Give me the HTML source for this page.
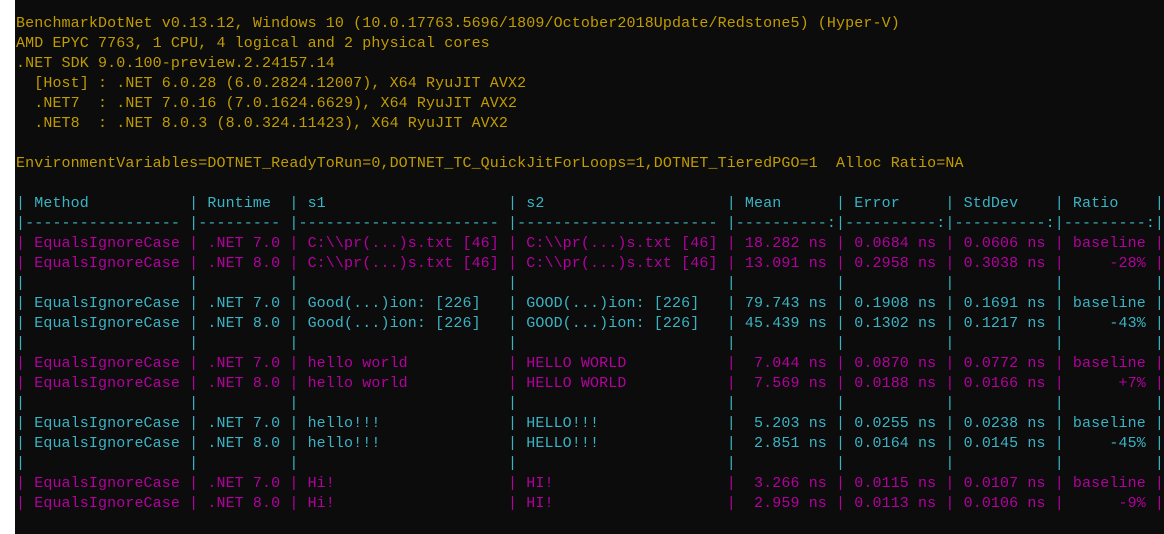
<!DOCTYPE html>
<html><head><meta charset="utf-8"><style>
html,body{margin:0;padding:0;background:#fff;width:1164px;height:534px;overflow:hidden}
#t{position:absolute;left:15px;top:0;width:1149px;height:534px;background:#0c0c0c;overflow:hidden}
pre{margin:0;position:absolute;left:1px;top:14px;font-family:"Liberation Mono",monospace;font-size:15px;letter-spacing:0.11px;line-height:20px;white-space:pre;color:#cccccc}
.y{color:#c19c00}.c{color:#3ab4c4}.m{color:#b4009e}
</style></head><body><div id="t"><pre><span class="y">BenchmarkDotNet v0.13.12, Windows 10 (10.0.17763.5696/1809/October2018Update/Redstone5) (Hyper-V)
AMD EPYC 7763, 1 CPU, 4 logical and 2 physical cores
.NET SDK 9.0.100-preview.2.24157.14
  [Host] : .NET 6.0.28 (6.0.2824.12007), X64 RyuJIT AVX2
  .NET7  : .NET 7.0.16 (7.0.1624.6629), X64 RyuJIT AVX2
  .NET8  : .NET 8.0.3 (8.0.324.11423), X64 RyuJIT AVX2

EnvironmentVariables=DOTNET_ReadyToRun=0,DOTNET_TC_QuickJitForLoops=1,DOTNET_TieredPGO=1  Alloc Ratio=NA
</span>
<span class="c">| Method           | Runtime  | s1                    | s2                    | Mean      | Error     | StdDev    | Ratio    | A
|----------------- |--------- |---------------------- |---------------------- |----------:|----------:|----------:|---------:|-</span>
<span class="m">| EqualsIgnoreCase | .NET 7.0 | C:\\pr(...)s.txt [46] | C:\\pr(...)s.txt [46] | 18.282 ns | 0.0684 ns | 0.0606 ns | baseline |
| EqualsIgnoreCase | .NET 8.0 | C:\\pr(...)s.txt [46] | C:\\pr(...)s.txt [46] | 13.091 ns | 0.2958 ns | 0.3038 ns |     -28% |</span>
<span class="c">|                  |          |                       |                       |           |           |           |          |
| EqualsIgnoreCase | .NET 7.0 | Good(...)ion: [226]   | GOOD(...)ion: [226]   | 79.743 ns | 0.1908 ns | 0.1691 ns | baseline |
| EqualsIgnoreCase | .NET 8.0 | Good(...)ion: [226]   | GOOD(...)ion: [226]   | 45.439 ns | 0.1302 ns | 0.1217 ns |     -43% |
|                  |          |                       |                       |           |           |           |          |</span>
<span class="m">| EqualsIgnoreCase | .NET 7.0 | hello world           | HELLO WORLD           |  7.044 ns | 0.0870 ns | 0.0772 ns | baseline |
| EqualsIgnoreCase | .NET 8.0 | hello world           | HELLO WORLD           |  7.569 ns | 0.0188 ns | 0.0166 ns |      +7% |</span>
<span class="c">|                  |          |                       |                       |           |           |           |          |
| EqualsIgnoreCase | .NET 7.0 | hello!!!              | HELLO!!!              |  5.203 ns | 0.0255 ns | 0.0238 ns | baseline |
| EqualsIgnoreCase | .NET 8.0 | hello!!!              | HELLO!!!              |  2.851 ns | 0.0164 ns | 0.0145 ns |     -45% |
|                  |          |                       |                       |           |           |           |          |</span>
<span class="m">| EqualsIgnoreCase | .NET 7.0 | Hi!                   | HI!                   |  3.266 ns | 0.0115 ns | 0.0107 ns | baseline |
| EqualsIgnoreCase | .NET 8.0 | Hi!                   | HI!                   |  2.959 ns | 0.0113 ns | 0.0106 ns |      -9% |</span></pre></div></body></html>
